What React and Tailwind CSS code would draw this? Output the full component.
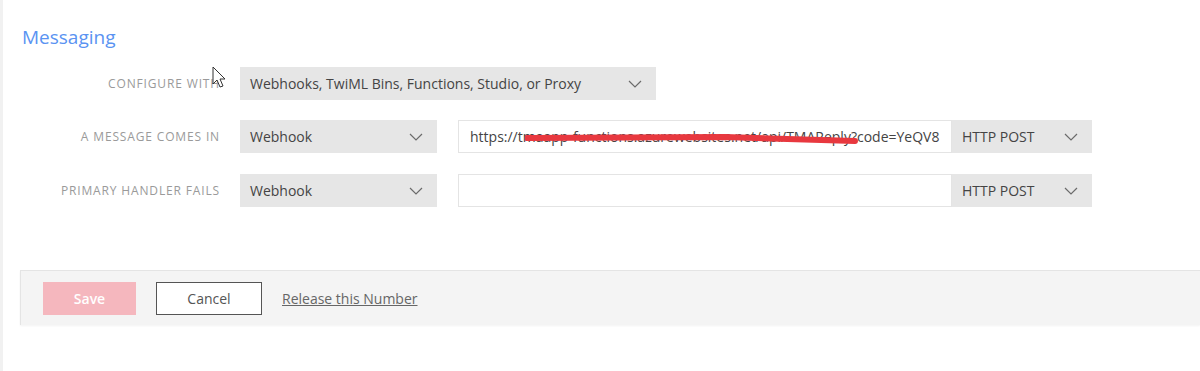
import React from "react";

const Chevron = ({ className = "" }) => (
  <svg width="14" height="8" viewBox="0 0 14 8" className={className} fill="none">
    <path d="M1 1 L7 7 L13 1" stroke="#6b6b6b" strokeWidth="1.2" />
  </svg>
);

const Select = ({ text, w }) => (
  <div className={`flex items-center justify-between h-[33px] bg-[#e6e6e6] pl-[10px] pr-[14px] ${w}`}>
    <span className="text-[14px] text-[#444]">{text}</span>
    <Chevron />
  </div>
);

const Label = ({ children }) => (
  <div className="w-[220px] text-right text-[12px] tracking-[0.85px] text-[#9a9a9a] uppercase">{children}</div>
);

export default function App() {
  return (
    <div
      className="relative w-[1200px] h-[371px] bg-white border-l-[3px] border-[#f1f1f1] overflow-hidden"
      style={{ fontFamily: "'Open Sans', sans-serif" }}
    >
      <div className="pl-[19px] pt-[24px] text-[19px] leading-[26px] text-[#5a93f2]">Messaging</div>

      <div className="mt-[17px] flex flex-col gap-[20px] -ml-[3px]">
        <div className="flex items-center gap-[20px]">
          <Label>Configure with</Label>
          <Select text="Webhooks, TwiML Bins, Functions, Studio, or Proxy" w="w-[416px]" />
        </div>
        <div className="flex items-center gap-[20px]">
          <Label>A message comes in</Label>
          <Select text="Webhook" w="w-[197px]" />
          <div className="ml-[1px] flex">
            <div className="relative w-[494px] h-[33px] border border-[#e4e4e4] bg-white flex items-center pl-[11px] pr-[8px]">
              <div className="min-w-0 flex-1 overflow-hidden whitespace-nowrap text-[14px] text-[#444]">
                https://tmaapp-functions.azurewebsites.net/api/TMAReply?code=YeQV8
              </div>
              <svg className="absolute left-[66px] top-[11px]" width="335" height="14" viewBox="0 0 335 14">
                <path d="M2 6 L200 5 L330 9" stroke="#e8383f" strokeWidth="6" strokeLinecap="round" fill="none" />
              </svg>
            </div>
            <Select text="HTTP POST" w="w-[140px]" />
          </div>
        </div>
        <div className="flex items-center gap-[20px] mt-[1px]">
          <Label>Primary handler fails</Label>
          <Select text="Webhook" w="w-[197px]" />
          <div className="ml-[1px] flex">
            <div className="w-[494px] h-[33px] border border-[#e4e4e4] bg-white" />
            <Select text="HTTP POST" w="w-[140px]" />
          </div>
        </div>
      </div>

      <div className="mt-[63px] ml-[17px] h-[55px] bg-[#f4f4f4] border-t border-l border-[#e4e4e4] shadow-[0_1px_2px_rgba(0,0,0,0.05)] flex items-center pl-[22px]">
        <button className="w-[93px] h-[33px] bg-[#f5b7be] text-white text-[14px] font-semibold">Save</button>
        <button className="ml-[20px] w-[106px] h-[33px] border border-[#555] bg-white text-[#555] text-[14px]">Cancel</button>
        <a className="ml-[20px] text-[14px] text-[#666] underline">Release this Number</a>
      </div>

      <svg className="absolute left-[209px] top-[66px]" width="16" height="24" viewBox="0 0 16 24">
        <path d="M1 1 L1 18 L5 14 L8 21 L11 20 L8 13 L13 13 Z" fill="white" stroke="#333" strokeWidth="1" />
      </svg>
    </div>
  );
}
